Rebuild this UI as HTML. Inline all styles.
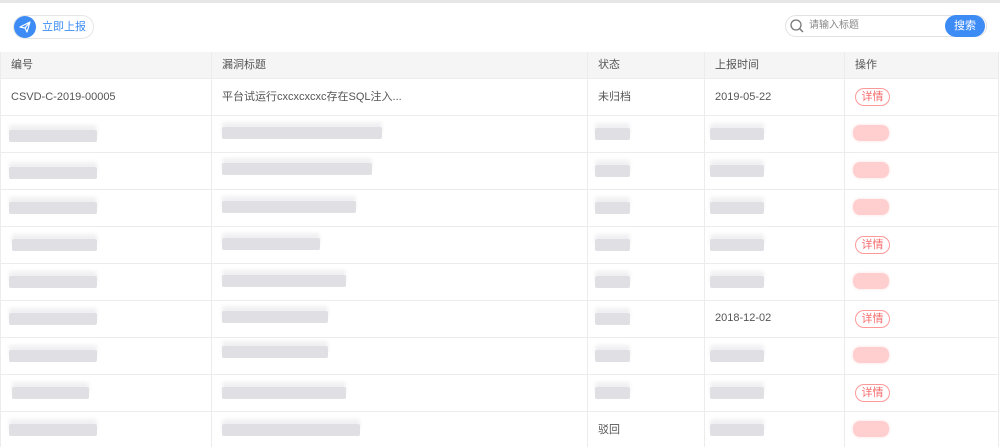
<!DOCTYPE html>
<html><head><meta charset="utf-8"><style>
body{margin:0;width:1000px;height:447px;background:#fff;position:relative;overflow:hidden;font-family:"Liberation Sans","Noto Sans CJK SC",sans-serif;font-size:11px;color:#555}
.a{position:absolute}
.hl{position:absolute;left:0;width:998px;height:1px;background:#ececec}
.vl{position:absolute;top:52px;bottom:0;width:1px;background:#ececec}
.t{position:absolute;line-height:14px;white-space:nowrap}
.b{position:absolute;height:12px;background:#e0dfe3;border-radius:2px;box-shadow:0 -5px 4px #f0f0f2}
.p{position:absolute;height:16px;background:#ffcfcf;border-radius:7px;box-shadow:0 0 3px #ffe0e0}
.btn{position:absolute;width:33px;height:16px;border:1px solid #f99;border-radius:9px;color:#f56c6c;text-align:center;line-height:16px;font-size:11px}
</style></head><body>
<div class="a" style="left:0;top:0;width:1000px;height:3px;background:#e6e6e6"></div>
<div class="a" style="left:13px;top:15px;width:79px;height:22px;border:1px solid #e6e6e6;border-radius:12px"></div>
<div class="a" style="left:14px;top:16px;width:22px;height:22px;border-radius:50%;background:#3d8cf5"></div>
<svg class="a" style="left:18px;top:20px" width="14" height="14" viewBox="0 0 14 14"><path d="M2 7 L12 2 L9 12 L7 8 Z M7 8 L12 2" fill="none" stroke="#fff" stroke-width="1.2" stroke-linejoin="round"/></svg>
<div class="t" style="left:42px;top:20px;color:#3d8cf5;font-size:11px">立即上报</div>
<div class="a" style="left:785px;top:15px;width:200px;height:20px;border:1px solid #e2e2e2;border-radius:11px"></div>
<svg class="a" style="left:789px;top:18px" width="16" height="16" viewBox="0 0 16 16"><circle cx="7" cy="7" r="5" fill="none" stroke="#777" stroke-width="1.3"/><path d="M10.5 10.5 L14 14" stroke="#777" stroke-width="1.4"/></svg>
<div class="t" style="left:809px;top:19px;color:#888;font-size:10px">请输入标题</div>
<div class="a" style="left:945px;top:15px;width:40px;height:22px;border-radius:11px;background:#3d8cf5;color:#fff;text-align:center;line-height:22px;font-size:11px">搜索</div>
<div class="a" style="left:0;top:52px;width:998px;height:26px;background:#f5f5f5"></div>
<div class="vl" style="left:211px"></div><div class="vl" style="left:587px"></div><div class="vl" style="left:704px"></div><div class="vl" style="left:844px"></div><div class="vl" style="left:998px"></div><div class="vl" style="left:0"></div>
<div class="t" style="left:11px;top:58px">编号</div><div class="t" style="left:222px;top:58px">漏洞标题</div><div class="t" style="left:598px;top:58px">状态</div><div class="t" style="left:715px;top:58px">上报时间</div><div class="t" style="left:855px;top:58px">操作</div>
<div class="hl" style="top:78px"></div><div class="hl" style="top:115px"></div><div class="hl" style="top:152px"></div><div class="hl" style="top:189px"></div><div class="hl" style="top:226px"></div><div class="hl" style="top:263px"></div><div class="hl" style="top:300px"></div><div class="hl" style="top:337px"></div><div class="hl" style="top:374px"></div><div class="hl" style="top:411px"></div>
<div class="t" style="left:11px;top:90px">CSVD-C-2019-00005</div><div class="t" style="left:222px;top:90px">平台试运行cxcxcxcxc存在SQL注入...</div><div class="t" style="left:598px;top:90px">未归档</div><div class="t" style="left:715px;top:90px">2019-05-22</div>
<div class="btn" style="left:855px;top:88px">详情</div>
<div class="b" style="left:9px;top:130px;width:88px"></div><div class="b" style="left:222px;top:127px;width:160px"></div><div class="b" style="left:595px;top:128px;width:35px"></div><div class="b" style="left:710px;top:128px;width:54px"></div><div class="p" style="left:853px;top:125px;width:36px"></div>
<div class="b" style="left:9px;top:167px;width:88px"></div><div class="b" style="left:222px;top:163px;width:150px"></div><div class="b" style="left:595px;top:165px;width:35px"></div><div class="b" style="left:710px;top:165px;width:54px"></div><div class="p" style="left:853px;top:162px;width:36px"></div>
<div class="b" style="left:9px;top:202px;width:88px"></div><div class="b" style="left:222px;top:201px;width:134px"></div><div class="b" style="left:595px;top:202px;width:35px"></div><div class="b" style="left:710px;top:202px;width:54px"></div><div class="p" style="left:853px;top:199px;width:36px"></div>
<div class="b" style="left:12px;top:239px;width:85px"></div><div class="b" style="left:222px;top:238px;width:98px"></div><div class="b" style="left:595px;top:239px;width:35px"></div><div class="b" style="left:710px;top:239px;width:54px"></div><div class="btn" style="left:855px;top:236px">详情</div>
<div class="b" style="left:9px;top:276px;width:88px"></div><div class="b" style="left:222px;top:275px;width:124px"></div><div class="b" style="left:595px;top:276px;width:35px"></div><div class="b" style="left:710px;top:276px;width:54px"></div><div class="p" style="left:853px;top:273px;width:36px"></div>
<div class="b" style="left:9px;top:313px;width:88px"></div><div class="b" style="left:222px;top:311px;width:106px"></div><div class="b" style="left:595px;top:313px;width:35px"></div><div class="t" style="left:715px;top:311px">2018-12-02</div><div class="btn" style="left:855px;top:310px">详情</div>
<div class="b" style="left:9px;top:350px;width:88px"></div><div class="b" style="left:222px;top:346px;width:106px"></div><div class="b" style="left:595px;top:350px;width:35px"></div><div class="b" style="left:710px;top:350px;width:54px"></div><div class="p" style="left:853px;top:347px;width:36px"></div>
<div class="b" style="left:12px;top:387px;width:77px"></div><div class="b" style="left:222px;top:387px;width:124px"></div><div class="b" style="left:595px;top:387px;width:35px"></div><div class="b" style="left:710px;top:387px;width:54px"></div><div class="btn" style="left:855px;top:384px">详情</div>
<div class="b" style="left:9px;top:424px;width:88px"></div><div class="b" style="left:222px;top:424px;width:138px"></div><div class="t" style="left:598px;top:423px">驳回</div><div class="b" style="left:710px;top:424px;width:54px"></div><div class="p" style="left:853px;top:421px;width:36px"></div>
</body></html>
